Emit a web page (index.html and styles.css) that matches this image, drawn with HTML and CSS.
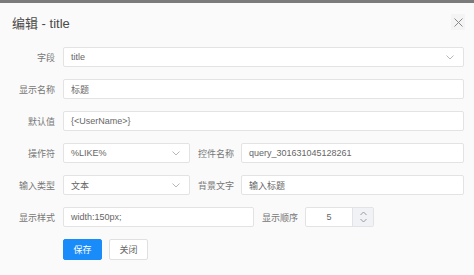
FILE: index.html
```html
<!DOCTYPE html>
<html>
<head>
<meta charset="utf-8">
<link rel="stylesheet" href="styles.css">
</head>
<body>
<div class="topbar"></div>
<div class="dialog">
  <div class="header">
    <span class="title">编辑 - title</span>
    <span class="close"><svg width="9" height="9" viewBox="0 0 9 9"><path d="M0.5 0.5L8.5 8.5M8.5 0.5L0.5 8.5" stroke="#8a8a8a" stroke-width="1" fill="none"/></svg></span>
  </div>
  <div class="form">
    <div class="row">
      <span class="lbl">字段</span>
      <div class="field select grow"><span>title</span><svg class="chev" width="8" height="5" viewBox="0 0 8 5"><path d="M0.5 0.5L4 4L7.5 0.5" stroke="#b8b8b8" fill="none"/></svg></div>
    </div>
    <div class="row">
      <span class="lbl">显示名称</span>
      <div class="field grow">标题</div>
    </div>
    <div class="row">
      <span class="lbl">默认值</span>
      <div class="field grow">{&lt;UserName&gt;}</div>
    </div>
    <div class="row">
      <span class="lbl">操作符</span>
      <div class="field select w-sel"><span>%LIKE%</span><svg class="chev" width="8" height="5" viewBox="0 0 8 5"><path d="M0.5 0.5L4 4L7.5 0.5" stroke="#b8b8b8" fill="none"/></svg></div>
      <span class="lbl2">控件名称</span>
      <div class="field grow">query_301631045128261</div>
    </div>
    <div class="row">
      <span class="lbl">输入类型</span>
      <div class="field select w-sel"><span>文本</span><svg class="chev" width="8" height="5" viewBox="0 0 8 5"><path d="M0.5 0.5L4 4L7.5 0.5" stroke="#b8b8b8" fill="none"/></svg></div>
      <span class="lbl2">背景文字</span>
      <div class="field grow">输入标题</div>
    </div>
    <div class="row">
      <span class="lbl">显示样式</span>
      <div class="field w-style">width:150px;</div>
      <span class="lbl2">显示顺序</span>
      <div class="num">
        <span class="num-val">5</span>
        <span class="spin">
          <svg width="7" height="5" viewBox="0 0 7 5"><path d="M0.5 4L3.5 1L6.5 4" stroke="#9a9a9a" fill="none"/></svg>
          <svg width="7" height="5" viewBox="0 0 7 5"><path d="M0.5 1L3.5 4L6.5 1" stroke="#9a9a9a" fill="none"/></svg>
        </span>
      </div>
    </div>
    <div class="row actions">
      <button class="btn primary">保存</button>
      <button class="btn">关闭</button>
    </div>
  </div>
</div>
</body>
</html>
```

FILE: styles.css
```css
html, body {
  margin: 0;
  padding: 0;
  background: #fafafa;
  font-family: "Liberation Sans", "Noto Sans CJK SC", sans-serif;
}
.topbar {
  height: 3px;
  background: #7b7b7b;
}
.dialog {
  background: #fafafa;
  height: 272px;
}
.header {
  height: 38px;
  display: flex;
  align-items: center;
  justify-content: space-between;
  padding: 0 9px 0 12px;
}
.title {
  font-size: 13px;
  font-weight: normal;
  color: #4a4a4a;
}
.close {
  width: 14px;
  height: 16px;
  display: flex;
  align-items: center;
  justify-content: center;
  background: #f4f4f4;
}
.form {
  margin-top: 6px;
  padding-right: 10px;
}
.row {
  display: flex;
  align-items: center;
  height: 20px;
  margin-bottom: 12px;
}
.lbl {
  width: 55px;
  margin-right: 8px;
  text-align: right;
  font-size: 9px;
  color: #777;
  flex-shrink: 0;
}
.lbl2 {
  width: 51px;
  box-sizing: border-box;
  padding-right: 7px;
  text-align: right;
  font-size: 9px;
  color: #777;
  flex-shrink: 0;
}
.field {
  box-sizing: border-box;
  height: 20px;
  border: 1px solid #e3e3e3;
  border-radius: 2px;
  background: #fff;
  padding: 0 7px;
  font-size: 9px;
  color: #666;
  display: flex;
  align-items: center;
}
.grow {
  flex: 1;
}
.select {
  justify-content: space-between;
}
.chev {
  margin-right: 2px;
}
.w-sel {
  width: 127px;
  flex-shrink: 0;
}
.w-style {
  width: 191px;
  flex-shrink: 0;
}
.num {
  box-sizing: border-box;
  width: 69px;
  height: 20px;
  border: 1px solid #e3e3e3;
  border-radius: 2px;
  background: #fff;
  display: flex;
}
.num-val {
  flex: 1;
  display: flex;
  align-items: center;
  justify-content: center;
  font-size: 9px;
  color: #666;
}
.spin {
  width: 20px;
  background: #f1f2f5;
  border-left: 1px solid #e3e3e3;
  display: flex;
  flex-direction: column;
  align-items: center;
  justify-content: center;
  gap: 2px;
}
.actions {
  padding-left: 63px;
  height: 21px;
}
.btn {
  box-sizing: border-box;
  width: 39px;
  height: 21px;
  margin-right: 7px;
  border: 1px solid #e0e0e0;
  border-radius: 2px;
  background: #fff;
  color: #666;
  font-family: "Liberation Sans", "Noto Sans CJK SC", sans-serif;
  font-size: 9px;
  padding: 0;
}
.btn.primary {
  background: #1a8cfa;
  border-color: #1a8cfa;
  color: #fff;
}
```
